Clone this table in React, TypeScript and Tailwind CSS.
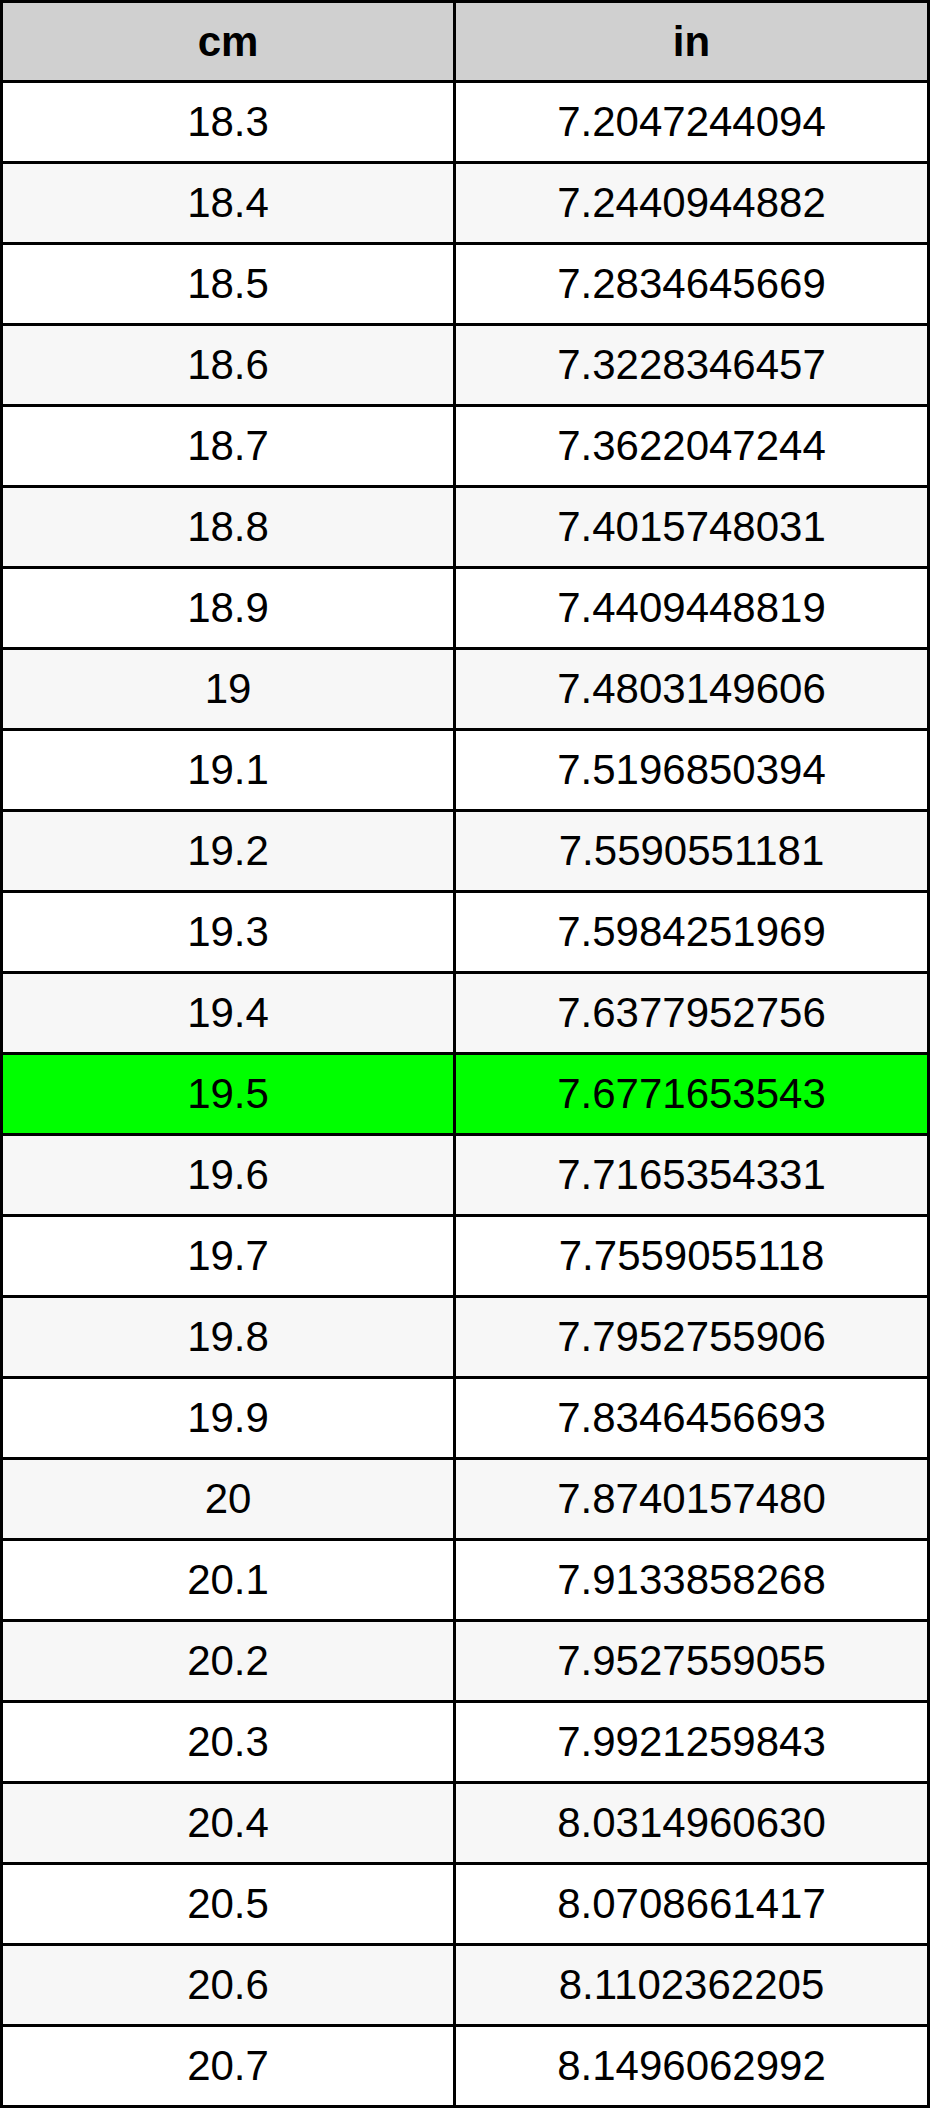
import React from "react"

const ROWS: [string, string][] = [
  ["18.3", "7.2047244094"],
  ["18.4", "7.2440944882"],
  ["18.5", "7.2834645669"],
  ["18.6", "7.3228346457"],
  ["18.7", "7.3622047244"],
  ["18.8", "7.4015748031"],
  ["18.9", "7.4409448819"],
  ["19", "7.4803149606"],
  ["19.1", "7.5196850394"],
  ["19.2", "7.5590551181"],
  ["19.3", "7.5984251969"],
  ["19.4", "7.6377952756"],
  ["19.5", "7.6771653543"],
  ["19.6", "7.7165354331"],
  ["19.7", "7.7559055118"],
  ["19.8", "7.7952755906"],
  ["19.9", "7.8346456693"],
  ["20", "7.8740157480"],
  ["20.1", "7.9133858268"],
  ["20.2", "7.9527559055"],
  ["20.3", "7.9921259843"],
  ["20.4", "8.0314960630"],
  ["20.5", "8.0708661417"],
  ["20.6", "8.1102362205"],
  ["20.7", "8.1496062992"],
]

const HIGHLIGHT = "19.5"

function Cell({ children, className = "" }: { children: React.ReactNode; className?: string }) {
  return (
    <div className={`flex items-center justify-center border-r-[3px] border-b-[3px] border-black ${className}`}>
      {children}
    </div>
  )
}

export default function App() {
  return (
    <div className="w-[930px] bg-white text-black font-['Liberation_Sans',Arial,sans-serif]">
      <div className="grid grid-cols-[453px_474px] border-l-[3px] border-t-[3px] border-black text-[42px] leading-none">
        <Cell className="h-[80px] bg-[#d0d0d0] font-bold">cm</Cell>
        <Cell className="h-[80px] bg-[#d0d0d0] font-bold">in</Cell>
        {ROWS.map(([cm, inch], i) => {
          const bg =
            cm === HIGHLIGHT ? "bg-[#00ff00]" : i % 2 === 0 ? "bg-white" : "bg-[#f7f7f7]"
          return (
            <React.Fragment key={cm}>
              <Cell className={`h-[81px] ${bg}`}>{cm}</Cell>
              <Cell className={`h-[81px] ${bg}`}>{inch}</Cell>
            </React.Fragment>
          )
        })}
      </div>
    </div>
  )
}
